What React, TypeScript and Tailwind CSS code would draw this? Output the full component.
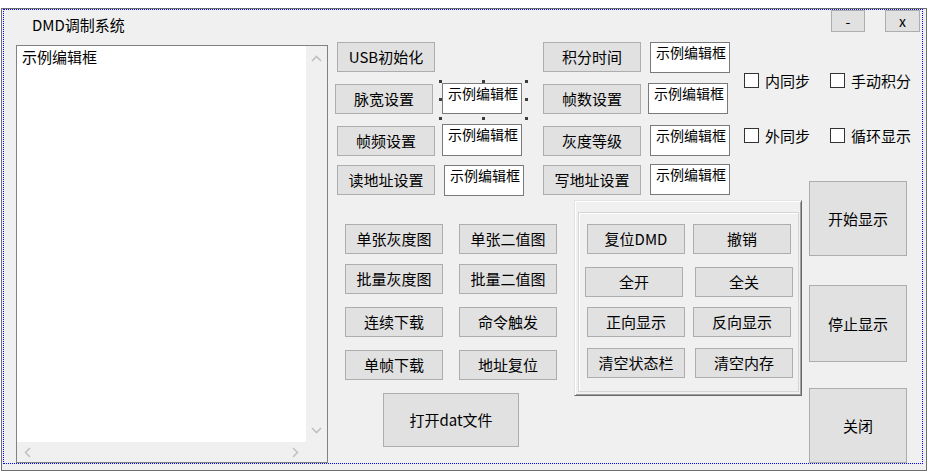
import clsx from "clsx";
import type { ReactNode } from "react";

const Btn = ({ children, className }: { children: ReactNode; className?: string }) => (
  <button
    type="button"
    className={clsx(
      "flex shrink-0 items-center justify-center border border-[#adadad] bg-[#e1e1e1] text-[15px] leading-[20px] text-black",
      className
    )}
  >
    {children}
  </button>
);

const Handle = ({ className }: { className: string }) => (
  <span className={clsx("absolute h-[3px] w-[3px] bg-[#3c3c3c]", className)} />
);

const Edit = ({ className, selected }: { className?: string; selected?: boolean }) => (
  <div
    className={clsx(
      "relative shrink-0 border border-[#7a7a7a] bg-white pl-[5px] text-[14px] leading-[18px] whitespace-nowrap text-black",
      className
    )}
  >
    示例编辑框
    {selected && (
      <>
        <Handle className="left-[-4px] top-[-4px]" />
        <Handle className="left-[39px] top-[-4px]" />
        <Handle className="left-[82px] top-[-4px]" />
        <Handle className="left-[-4px] top-[14px]" />
        <Handle className="left-[82px] top-[14px]" />
        <Handle className="left-[-4px] top-[33px]" />
        <Handle className="left-[39px] top-[33px]" />
        <Handle className="left-[82px] top-[33px]" />
      </>
    )}
  </div>
);

const Check = ({ label, className }: { label: string; className?: string }) => (
  <label className={clsx("flex items-center", className)}>
    <span className="h-[15px] w-[15px] shrink-0 border border-[#333333] bg-white" />
    <span className="ml-[6px] text-[15px] leading-[20px] whitespace-nowrap text-black">{label}</span>
  </label>
);

const ListBox = () => (
  <div className="ml-[14px] mt-[3px] flex h-[418px] w-[312px] shrink-0 flex-col border border-[#828282] bg-[#f0f0f0]">
    <div className="flex flex-1">
      <div className="flex-1 rounded-br-[2px] bg-white pl-[5px] pt-[1px] text-[15px] leading-[20px] text-black">
        示例编辑框
      </div>
      <div className="flex w-[21px] flex-col items-center justify-between pb-[8px] pt-[9px]">
        <svg width="11" height="7" viewBox="0 0 11 7">
          <path d="M1 6L5.5 1.5L10 6" stroke="#c1c1c1" strokeWidth="1.6" fill="none" />
        </svg>
        <svg width="11" height="7" viewBox="0 0 11 7">
          <path d="M1 1L5.5 5.5L10 1" stroke="#c1c1c1" strokeWidth="1.6" fill="none" />
        </svg>
      </div>
    </div>
    <div className="flex h-[20px]">
      <div className="flex flex-1 items-center justify-between px-[7px]">
        <svg width="7" height="11" viewBox="0 0 7 11">
          <path d="M6 1L1.5 5.5L6 10" stroke="#c1c1c1" strokeWidth="1.6" fill="none" />
        </svg>
        <svg width="7" height="11" viewBox="0 0 7 11">
          <path d="M1 1L5.5 5.5L1 10" stroke="#c1c1c1" strokeWidth="1.6" fill="none" />
        </svg>
      </div>
      <div className="w-[21px]" />
    </div>
  </div>
);

export default function App() {
  return (
    <div className="h-[473px] w-[944px] overflow-hidden bg-white pl-[1px] pt-[8px] font-['Noto_Sans_CJK_SC',sans-serif] text-black">
      <div className="relative h-[463px] w-[926px] border border-[#6e6e6e] bg-[#f0f0f0]">
        {/* selection frame of the dialog in the editor */}
        <div className="pointer-events-none absolute left-[1px] top-0 z-0 h-[455px] w-[920px] border border-dotted border-[#0000ff]" />

        <div className="relative z-10 flex flex-col">
          {/* title row */}
          <div className="flex h-[33px] items-start">
            <div className="ml-[30px] mt-[6px] text-[15px] leading-[20px]">DMD调制系统</div>
            <Btn className="ml-auto mt-[1px] h-[22px] w-[34px] !text-[14px]">-</Btn>
            <Btn className="ml-[20px] mr-[6px] mt-[1px] h-[22px] w-[35px] !text-[14px]">x</Btn>
          </div>

          <div className="flex h-[421px] items-start">
            <ListBox />

            <div className="ml-[7px] flex flex-col">
              {/* settings rows + sync options */}
              <div className="flex h-[139px] items-start">
                <div className="flex flex-col">
                  <div className="flex h-[30px] items-start">
                    <Btn className="ml-[2px] h-[30px] w-[98px]">USB初始化</Btn>
                    <Btn className="ml-[108px] h-[30px] w-[98px]">积分时间</Btn>
                    <Edit className="ml-[9px] h-[31px] w-[80px]" />
                  </div>
                  <div className="mt-[12px] flex h-[30px] items-start">
                    <Btn className="h-[30px] w-[98px]">脉宽设置</Btn>
                    <Edit selected className="-mt-[1px] ml-[9px] h-[31px] w-[80px]" />
                    <Btn className="ml-[21px] h-[30px] w-[98px]">帧数设置</Btn>
                    <Edit className="-mt-[1px] ml-[7px] h-[31px] w-[80px]" />
                  </div>
                  <div className="mt-[12px] flex h-[30px] items-start">
                    <Btn className="ml-[2px] h-[30px] w-[98px]">帧频设置</Btn>
                    <Edit className="-mt-[2px] ml-[7px] h-[32px] w-[80px]" />
                    <Btn className="ml-[21px] h-[30px] w-[98px]">灰度等级</Btn>
                    <Edit className="-mt-[1px] ml-[9px] h-[31px] w-[80px]" />
                  </div>
                  <div className="mt-[9px] flex h-[30px] items-start">
                    <Btn className="ml-[2px] h-[30px] w-[98px]">读地址设置</Btn>
                    <Edit className="ml-[9px] h-[31px] w-[80px]" />
                    <Btn className="ml-[19px] h-[30px] w-[98px]">写地址设置</Btn>
                    <Edit className="-mt-[1px] ml-[9px] h-[31px] w-[80px]" />
                  </div>
                </div>

                <div className="ml-[14px] mt-[31px] flex flex-col">
                  <div className="flex h-[15px] items-center">
                    <Check label="内同步" className="w-[86px]" />
                    <Check label="手动积分" />
                  </div>
                  <div className="mt-[40px] flex h-[15px] items-center">
                    <Check label="外同步" className="w-[86px]" />
                    <Check label="循环显示" />
                  </div>
                </div>
              </div>

              {/* image buttons, control group, display buttons */}
              <div className="flex items-start">
                <div className="ml-[10px] mt-[43px] flex flex-col">
                  <div className="flex">
                    <Btn className="h-[30px] w-[98px]">单张灰度图</Btn>
                    <Btn className="ml-[16px] h-[30px] w-[98px]">单张二值图</Btn>
                  </div>
                  <div className="mt-[10px] flex">
                    <Btn className="h-[30px] w-[98px]">批量灰度图</Btn>
                    <Btn className="ml-[16px] h-[30px] w-[98px]">批量二值图</Btn>
                  </div>
                  <div className="mt-[13px] flex">
                    <Btn className="h-[30px] w-[98px]">连续下载</Btn>
                    <Btn className="ml-[16px] h-[30px] w-[98px]">命令触发</Btn>
                  </div>
                  <div className="mt-[13px] flex">
                    <Btn className="h-[30px] w-[98px]">单帧下载</Btn>
                    <Btn className="ml-[16px] h-[30px] w-[98px]">地址复位</Btn>
                  </div>
                  <Btn className="ml-[38px] mt-[13px] h-[54px] w-[136px]">打开dat文件</Btn>
                </div>

                <div className="ml-[17px] mt-[19px] h-[196px] w-[228px] shrink-0 border border-b-[#696969] border-l-[#e3e3e3] border-r-[#696969] border-t-[#e3e3e3] shadow-[inset_1px_1px_0_#ffffff,inset_-1px_-1px_0_#a0a0a0]">
                  <div className="ml-[3px] mt-[11px] h-[180px] w-[221px] border border-[#d5d5d5] pt-[11px] shadow-[inset_1px_1px_0_#ffffff]">
                    <div className="flex">
                      <Btn className="ml-[8px] h-[30px] w-[98px]">复位DMD</Btn>
                      <Btn className="ml-[8px] h-[30px] w-[98px]">撤销</Btn>
                    </div>
                    <div className="mt-[13px] flex">
                      <Btn className="ml-[6px] h-[30px] w-[98px]">全开</Btn>
                      <Btn className="ml-[12px] h-[30px] w-[98px]">全关</Btn>
                    </div>
                    <div className="mt-[10px] flex">
                      <Btn className="ml-[8px] h-[30px] w-[98px]">正向显示</Btn>
                      <Btn className="ml-[8px] h-[30px] w-[98px]">反向显示</Btn>
                    </div>
                    <div className="mt-[11px] flex">
                      <Btn className="ml-[8px] h-[30px] w-[98px]">清空状态栏</Btn>
                      <Btn className="ml-[10px] h-[30px] w-[98px]">清空内存</Btn>
                    </div>
                  </div>
                </div>

                <div className="ml-[7px] flex flex-col">
                  <Btn className="h-[75px] w-[98px]">开始显示</Btn>
                  <Btn className="mt-[29px] h-[77px] w-[98px]">停止显示</Btn>
                  <Btn className="mt-[26px] h-[75px] w-[98px]">关闭</Btn>
                </div>
              </div>
            </div>
          </div>
        </div>
      </div>
    </div>
  );
}
